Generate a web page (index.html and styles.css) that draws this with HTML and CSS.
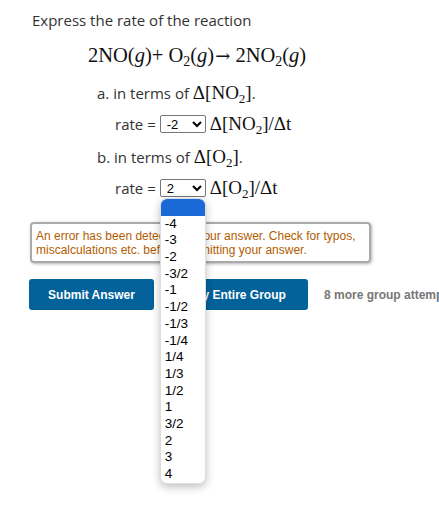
FILE: index.html
```html
<!DOCTYPE html>
<html>
<head>
<meta charset="utf-8">
<link rel="stylesheet" href="styles.css">
</head>
<body>
<div class="page">
  <p class="title">Express the rate of the reaction</p>
  <div class="equation math">2NO(<i>g</i>)+ O<sub>2</sub>(<i>g</i>)<span class="arrow">→</span> 2NO<sub>2</sub>(<i>g</i>)</div>
  <div class="part">a. in terms of&nbsp;<span class="math">Δ[NO<sub>2</sub>]</span>.</div>
  <div class="rate"><span>rate =</span><span class="selwrap"><select class="sel"><option></option><option selected>-2</option></select></span><span class="math">Δ[NO<sub>2</sub>]/Δt</span></div>
  <div class="part">b. in terms of&nbsp;<span class="math">Δ[O<sub>2</sub>]</span>.</div>
  <div class="rate"><span>rate =</span><span class="selwrap"><select class="sel"><option></option><option selected>2</option></select>
    <ul class="menu">
      <li class="hl">&nbsp;</li>
      <li>-4</li><li>-3</li><li>-2</li><li>-3/2</li><li>-1</li><li>-1/2</li><li>-1/3</li><li>-1/4</li>
      <li>1/4</li><li>1/3</li><li>1/2</li><li>1</li><li>3/2</li><li>2</li><li>3</li><li>4</li>
    </ul></span><span class="math">Δ[O<sub>2</sub>]/Δt</span></div>
  <div class="error">An error has been detected in your answer. Check for typos, miscalculations etc. before submitting your answer.</div>
  <div class="actions">
    <button class="btn submit">Submit Answer</button>
    <button class="btn try">Try Entire Group</button>
    <span class="attempts">8 more group attempts remaining</span>
  </div>
</div>
</body>
</html>
```
FILE: styles.css
```css
html, body { margin: 0; padding: 0; background: #fff; }
body { width: 439px; height: 516px; overflow: hidden; }
.page {
  padding: 10px 0 0 32px;
  font-family: "Open Sans", sans-serif;
  font-size: 15px;
  color: #333;
}
.title { margin: 0; line-height: 20px; }
.math { font-family: "Liberation Serif", "DejaVu Serif", serif; color: #111; font-size: 19px; }
.math sub { font-size: 13px; vertical-align: -4px; line-height: 0; }
.equation { margin: 13px 0 0 56px; line-height: 24px; height: 24px; white-space: nowrap; font-size: 20.5px; }
.equation sub { font-size: 14px; }
.arrow { font-family: "DejaVu Serif", serif; font-size: 18px; margin-left: 1px; }
.part { display: flex; align-items: center; height: 24px; margin: 14px 0 0 65px; white-space: nowrap; }
.rate { display: flex; align-items: center; gap: 4px; height: 24px; margin: 7px 0 0 83px; white-space: nowrap; }
.part + .rate { margin-top: 7px; }
.rate + .part { margin-top: 9px; }
.selwrap { position: relative; display: block; height: 18px; }
.sel {
  display: block;
  width: 46px; height: 18px; padding: 0 0 0 2px; margin: 0;
  font-family: "Liberation Sans", Arial, sans-serif; font-size: 13px; color: #000;
  border: 1px solid #767676; border-radius: 2px; background: #fff;
}
.menu {
  position: absolute; left: 0; top: 19px; z-index: 5;
  width: 46px; margin: 0; padding: 0; list-style: none;
  background: #fff; border: 1px solid #ddd; border-radius: 7px;
  box-shadow: 0 3px 8px rgba(0,0,0,.25);
  font-family: "Liberation Sans", Arial, sans-serif; font-size: 13.5px; color: #000;
  overflow: hidden; box-sizing: border-box;
}
.menu li { height: 16.7px; line-height: 16.7px; padding-left: 4px; }
.menu li.hl { background: #1b69d6; border-radius: 6px 6px 0 0; margin: 0 -1px; }
.error {
  margin: 22px 0 0 -2px; width: 328px;
  border: 2px solid #aaa; border-radius: 4px;
  box-shadow: 1px 1px 3px rgba(0,0,0,.3);
  padding: 5px 5px 4px 4px;
  font-family: "Liberation Sans", Arial, sans-serif; font-size: 12px; line-height: 14px;
  color: #b25c00;
}
.actions { display: flex; align-items: center; margin: 16px 0 0 -3px; white-space: nowrap; }
.btn {
  flex: none;
  height: 31px; border: none; border-radius: 3px; background: #03629a; color: #fff;
  font-family: "Liberation Sans", Arial, sans-serif; font-size: 12px; font-weight: bold;
  padding: 0 10px; margin: 0;
}
.submit { width: 125px; }
.try { margin-left: 15px; width: 139px; }
.attempts {
  flex: none;
  margin-left: 16px; color: #777;
  font-family: "Liberation Sans", Arial, sans-serif; font-size: 12px; font-weight: bold;
}
```
